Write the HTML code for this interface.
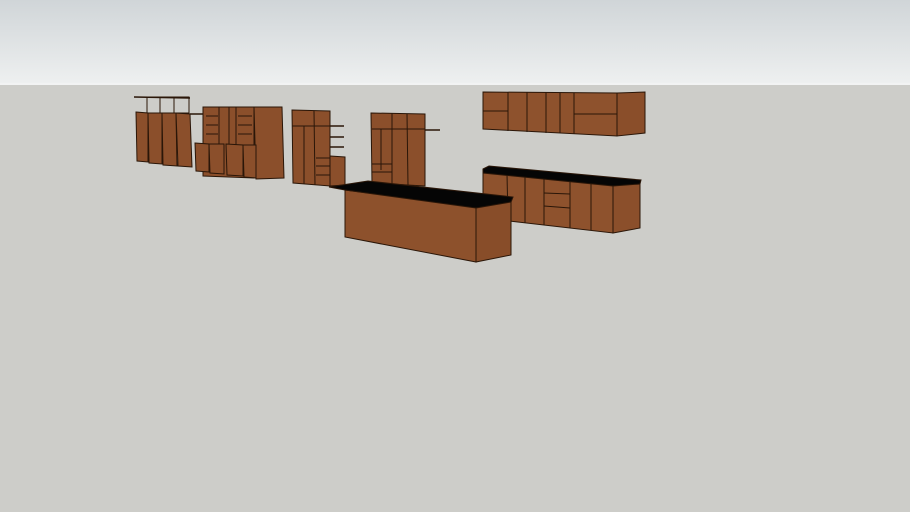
<!DOCTYPE html>
<html><head><meta charset="utf-8"><style>
html,body{margin:0;padding:0;width:910px;height:512px;overflow:hidden;background:#cdcdc9}
svg{display:block}
</style></head><body>
<svg width="910" height="512" viewBox="0 0 910 512" xmlns="http://www.w3.org/2000/svg">
<defs>
<linearGradient id="sky" x1="0" y1="0" x2="0" y2="1">
<stop offset="0" stop-color="#d0d5d8"/><stop offset="1" stop-color="#eef0f0"/>
</linearGradient>
</defs>
<rect x="0" y="0" width="910" height="84" fill="url(#sky)"/>
<rect x="0" y="83" width="910" height="2" fill="#f2f3f3"/>
<rect x="0" y="85" width="910" height="427" fill="#cdcdc9"/>
<g stroke="#2a1608" stroke-width="1" fill="#8b4f2b">
<!-- group1 frames -->
<line x1="134" y1="97" x2="190" y2="98" stroke-width="1.5"/>
<rect x="147" y="97" width="42" height="16" fill="none"/>
<line x1="160" y1="97" x2="160" y2="113"/><line x1="174" y1="97" x2="174" y2="113"/>
<polygon points="136,112 148,113 148,162 137,161"/>
<polygon points="148,113 162,113 162,164 149,163"/>
<polygon points="162,113 176,113 177,166 163,165"/>
<polygon points="176,113 190,114 192,167 178,166"/>
<line x1="190" y1="114" x2="218" y2="114" stroke-width="1.5"/>
<!-- group2 -->
<polygon points="203,107 254,107 254,178 203,176"/>
<polygon points="254,107 282,107 284,178 256,179"/>
<line x1="219" y1="107" x2="219" y2="145"/><line x1="229" y1="107" x2="229" y2="145"/><line x1="236" y1="107" x2="236" y2="145"/>
<line x1="206" y1="116" x2="218" y2="116"/><line x1="206" y1="125" x2="218" y2="125"/><line x1="206" y1="134" x2="218" y2="134"/>
<line x1="238" y1="116" x2="252" y2="116"/><line x1="238" y1="125" x2="252" y2="125"/><line x1="238" y1="134" x2="252" y2="134"/>
<polygon points="195,143 209,144 209,172 196,171"/>
<polygon points="209,144 224,144 224,174 210,173"/>
<polygon points="226,144 243,145 243,176 227,175"/>
<polygon points="243,145 256,145 256,178 244,177"/>
<!-- group3 -->
<polygon points="292,110 330,111 330,186 293,183"/>
<line x1="292" y1="126" x2="330" y2="126"/><line x1="314" y1="111" x2="315" y2="185"/><line x1="304" y1="126" x2="304" y2="184"/>
<polygon points="330,156 345,157 345,185 330,186"/>
<line x1="316" y1="158" x2="330" y2="158"/><line x1="316" y1="166" x2="330" y2="166"/><line x1="316" y1="175" x2="330" y2="175"/>
<line x1="330" y1="126" x2="344" y2="126" stroke-width="1.5"/><line x1="330" y1="137" x2="344" y2="137" stroke-width="1.5"/><line x1="330" y1="147" x2="344" y2="147" stroke-width="1.5"/>
<!-- group4 -->
<polygon points="371,113 425,114 425,186 372,183"/>
<line x1="372" y1="129" x2="425" y2="129"/><line x1="392" y1="113" x2="392" y2="184"/><line x1="407" y1="114" x2="408" y2="185"/><line x1="381" y1="129" x2="381" y2="170"/>
<line x1="372" y1="164" x2="392" y2="164"/><line x1="372" y1="172" x2="392" y2="172"/>
<line x1="425" y1="130" x2="440" y2="130" stroke-width="1.5"/>
<!-- upper cabinet -->
<polygon points="483,92 617,93 617,136 483,129" fill="#8e522d"/>
<polygon points="617,93 645,92 645,133 617,136" fill="#8a4e2a"/>
<line x1="508" y1="92" x2="508" y2="131"/><line x1="527" y1="92" x2="527" y2="132"/><line x1="546" y1="92" x2="546" y2="133"/><line x1="560" y1="93" x2="560" y2="133"/><line x1="574" y1="93" x2="574" y2="134"/>
<line x1="483" y1="111" x2="508" y2="111"/><line x1="574" y1="114" x2="617" y2="114"/>
<!-- counter -->
<polygon points="483,172 613,184 613,233 483,218" fill="#8e522d"/>
<polygon points="613,184 640,182 640,228 613,233"/>
<line x1="507" y1="174" x2="508" y2="221"/><line x1="525" y1="176" x2="525" y2="223"/><line x1="544" y1="178" x2="544" y2="225"/><line x1="570" y1="180" x2="570" y2="228"/><line x1="591" y1="182" x2="591" y2="230"/>
<line x1="544" y1="193" x2="570" y2="194"/><line x1="544" y1="206" x2="570" y2="208"/>
<polygon points="483,169 489,166 641,180 640,184 613,186 483,173" fill="#050505"/>
<!-- island -->
<polygon points="345,190 476,207 476,262 345,237" fill="#8d512c"/>
<polygon points="476,207 511,201 511,255 476,262" fill="#884d29"/>
<polygon points="329,187 368,181 513,197 511,202 476,208 345,190" fill="#050505"/>
</g>
</svg>
</body></html>
